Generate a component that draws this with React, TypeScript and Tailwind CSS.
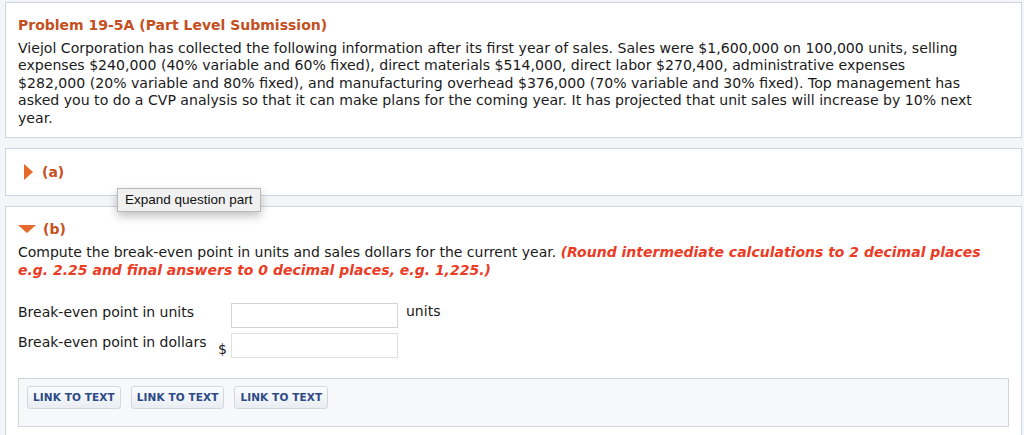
import { useState } from 'react';

export default function App() {
  const [units, setUnits] = useState('');
  const [dollars, setDollars] = useState('');

  return (
    <div className="min-h-screen bg-[#f3f5f8] pl-[5px] pr-[2px] pt-[2px] font-['DejaVu_Sans',Verdana,sans-serif] text-[14px] text-[#1a1a1a]">
      {/* Problem statement */}
      <div className="border border-[#cdd5e0] bg-white px-[12px] pb-[10px] pt-[12px]">
        <h2 className="text-[14px] font-bold leading-[20px] text-[#c4501f]">Problem 19-5A (Part Level Submission)</h2>
        <p className="mt-[5px] max-w-[958px] text-[14.1px] leading-[17.4px]">
          Viejol Corporation has collected the following information after its first year of sales. Sales were $1,600,000 on 100,000 units, selling expenses $240,000 (40% variable and 60% fixed), direct materials $514,000, direct labor $270,400, administrative expenses $282,000 (20% variable and 80% fixed), and manufacturing overhead $376,000 (70% variable and 30% fixed). Top management has asked you to do a CVP analysis so that it can make plans for the coming year. It has projected that unit sales will increase by 10% next year.
        </p>
      </div>

      {/* Part (a), collapsed */}
      <div className="relative mt-[10px] flex h-[48px] items-center border border-[#cdd5e0] bg-white pl-[17px]">
        <svg width="11" height="16" viewBox="0 0 11 16" className="mr-[8px]">
          <path d="M1 0 L10 8 L1 16 Z" fill="#e8692c" />
        </svg>
        <span className="font-bold text-[#c4501f]">(a)</span>
        <div className="absolute left-[111px] top-[39px] z-10 border border-[#b9b9b9] bg-[#f0f0f0] px-[7px] py-[3px] font-['Liberation_Sans',Arial,sans-serif] text-[13.5px] leading-[16px] text-[#111] shadow-[0_4px_10px_rgba(0,0,0,0.25)]">
          Expand question part
        </div>
      </div>

      {/* Part (b), expanded */}
      <div className="mt-[10px] border border-[#cdd5e0] bg-white px-[12px] pb-[10px] pt-[12px]">
        <div className="flex items-center">
          <svg width="18" height="9" viewBox="0 0 18 9" className="mr-[7px]">
            <path d="M0 0 L18 0 L9 8 Z" fill="#e8692c" />
          </svg>
          <span className="font-bold text-[#c4501f]">(b)</span>
        </div>
        <p className="mt-[3px] leading-[18px]">
          Compute the break-even point in units and sales dollars for the current year.{' '}
          <span className="font-bold italic text-[#ec3b24]">
            (Round intermediate calculations to 2 decimal places e.g. 2.25 and final answers to 0 decimal places, e.g. 1,225.)
          </span>
        </p>

        <div className="mt-[24px] flex flex-col gap-[5px]">
          <div className="flex items-start">
            <span className="w-[200px] pt-[1px] leading-[17px]">Break-even point in units</span>
            <span className="w-[13px]" />
            <input
              value={units}
              onChange={(e) => setUnits(e.target.value)}
              className="h-[25px] w-[167px] border border-[#d4d4d4] bg-white px-1 outline-none"
            />
            <span className="ml-[8px] leading-[17px]">units</span>
          </div>
          <div className="flex items-start">
            <span className="w-[200px] pt-[1px] leading-[17px]">Break-even point in dollars</span>
            <span className="flex w-[13px] items-end self-stretch leading-[17px]">$</span>
            <input
              value={dollars}
              onChange={(e) => setDollars(e.target.value)}
              className="h-[25px] w-[167px] border border-[#e0e0e0] bg-white px-1 outline-none"
            />
          </div>
        </div>

        <div className="mt-[20px] flex h-[49px] items-start gap-[10px] border border-[#cdd5e0] bg-[#f7f8fa] pl-[8px] pt-[7px]">
          {[0, 1, 2].map((i) => (
            <button
              key={i}
              className="h-[23px] rounded-[3px] border border-[#d3d8df] bg-gradient-to-b from-[#fbfcfd] to-[#e9edf2] px-[5px] text-[10.5px] font-bold tracking-[0.1px] text-[#2c4a86]"
            >
              LINK TO TEXT
            </button>
          ))}
        </div>
      </div>
    </div>
  );
}
